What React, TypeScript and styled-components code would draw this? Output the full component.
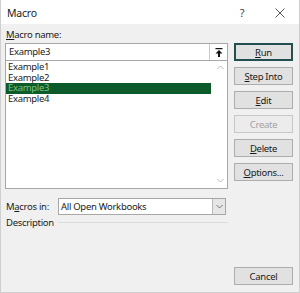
import React from "react";
import styled, { createGlobalStyle } from "styled-components";

const GlobalStyle = createGlobalStyle`
  html, body {
    margin: 0;
    padding: 0;
    background: #f0f0f0;
  }
  body {
    font-family: "Noto Sans", "Open Sans", sans-serif;
  }
`;

const Dialog = styled.div`
  width: 300px;
  height: 293px;
  box-sizing: border-box;
  border: 1px solid #cfcfcf;
  border-top: none;
  display: flex;
  flex-direction: column;
  background: #f0f0f0;
  color: #1b1b1b;
  font-size: 9.5px;
  letter-spacing: -0.3px;
`;

const TitleBar = styled.div`
  height: 24px;
  background: #ffffff;
  display: flex;
  align-items: center;
  padding-left: 6px;
`;

const Title = styled.div`
  flex: 1;
  font-size: 10.5px;
  letter-spacing: -0.2px;
  padding-top: 1px;
`;

const TitleButton = styled.div`
  width: 38px;
  height: 24px;
  display: flex;
  align-items: center;
  justify-content: center;
  color: #444;
  font-size: 11px;
  padding-top: 1px;
`;

const Body = styled.div`
  flex: 1;
  display: grid;
  grid-template-columns: 223px 59px;
  column-gap: 6px;
  padding: 3px 5px 7px 4px;
`;

const Left = styled.div`
  display: flex;
  flex-direction: column;
`;

const Right = styled.div`
  display: flex;
  flex-direction: column;
  gap: 6px;
  padding-top: 16px;
`;

const Label = styled.div`
  height: 16px;
  line-height: 16px;
  padding-left: 1px;
`;

const NameRow = styled.div`
  height: 18px;
  box-sizing: border-box;
  display: flex;
  background: #fff;
  border: 1px solid #a7a7a7;
`;

const NameText = styled.div`
  flex: 1;
  line-height: 16px;
  padding-left: 3px;
`;

const UpButton = styled.div`
  width: 17px;
  border-left: 1px solid #c9c9c9;
  display: flex;
  align-items: center;
  justify-content: center;
`;

const List = styled.div`
  height: 128px;
  box-sizing: border-box;
  background: #fff;
  border: 1px solid #a7a7a7;
  border-top: none;
  display: flex;
`;

const Items = styled.div`
  flex: 1;
  padding-top: 1px;
`;

const Item = styled.div<{ $selected?: boolean }>`
  height: 10.5px;
  line-height: 10.5px;
  padding-left: 2px;
  margin-right: 2px;
  background: ${(p) => (p.$selected ? "#0d5a2b" : "transparent")};
  color: ${(p) => (p.$selected ? "#7cc37e" : "#1b1b1b")};
`;

const ScrollBar = styled.div`
  width: 14px;
  display: flex;
  flex-direction: column;
  justify-content: space-between;
  align-items: center;
  padding: 4px 0 5px;
`;

const MacrosRow = styled.div`
  margin-top: 9px;
  height: 17px;
  display: flex;
  align-items: center;
`;

const RowLabel = styled.div`
  width: 52px;
  padding-left: 1px;
`;

const DescLabel = styled.div`
  padding-left: 1px;
`;

const Select = styled.div`
  flex: 1;
  height: 17px;
  box-sizing: border-box;
  margin-right: 2px;
  background: #fff;
  border: 1px solid #a7a7a7;
  display: flex;
`;

const SelectText = styled.div`
  flex: 1;
  line-height: 15px;
  padding-left: 2px;
`;

const DropButton = styled.div`
  width: 12px;
  background: #e6e6e6;
  border-left: 1px solid #b9b9b9;
  display: flex;
  align-items: center;
  justify-content: center;
`;

const DescRow = styled.div`
  height: 15px;
  display: flex;
  align-items: center;
`;

const Rule = styled.div`
  flex: 1;
  height: 1px;
  background: #dcdcdc;
  margin-left: 4px;
`;

const Button = styled.div<{ $default?: boolean; $disabled?: boolean }>`
  height: 18px;
  box-sizing: border-box;
  display: flex;
  align-items: center;
  justify-content: center;
  background: ${(p) => (p.$disabled ? "#ececec" : "#e1e1e1")};
  border: ${(p) =>
    p.$default ? "2px solid #23504f" : p.$disabled ? "1px solid #c8c8c8" : "1px solid #adadad"};
  color: ${(p) => (p.$disabled ? "#a3a3a3" : "#1b1b1b")};
`;

const CancelButton = styled(Button)`
  margin-top: auto;
`;

const Chevron = ({ up, color = "#b5b5b5" }: { up?: boolean; color?: string }) => (
  <svg width="7" height="5" viewBox="0 0 7 5">
    <polyline
      points={up ? "0.5,4 3.5,1 6.5,4" : "0.5,1 3.5,4 6.5,1"}
      fill="none"
      stroke={color}
      strokeWidth="1"
    />
  </svg>
);

const UpArrowIcon = () => (
  <svg width="8" height="9" viewBox="0 0 8 9">
    <rect x="0.5" y="0" width="7" height="1.2" fill="#111" />
    <polygon points="4,2 7.5,5.5 0.5,5.5" fill="#111" />
    <rect x="3" y="5" width="2" height="4" fill="#111" />
  </svg>
);

const CloseIcon = () => (
  <svg width="10" height="10" viewBox="0 0 10 10">
    <path d="M0.5 0.5 L9.5 9.5 M9.5 0.5 L0.5 9.5" stroke="#444" strokeWidth="0.9" />
  </svg>
);

const macros = ["Example1", "Example2", "Example3", "Example4"];

export default function App() {
  return (
    <>
      <GlobalStyle />
      <Dialog>
        <TitleBar>
          <Title>Macro</Title>
          <TitleButton>?</TitleButton>
          <TitleButton>
            <CloseIcon />
          </TitleButton>
        </TitleBar>
        <Body>
          <Left>
            <Label>
              <u>M</u>acro name:
            </Label>
            <NameRow>
              <NameText>Example3</NameText>
              <UpButton>
                <UpArrowIcon />
              </UpButton>
            </NameRow>
            <List>
              <Items>
                {macros.map((m) => (
                  <Item key={m} $selected={m === "Example3"}>
                    {m}
                  </Item>
                ))}
              </Items>
              <ScrollBar>
                <Chevron up />
                <Chevron />
              </ScrollBar>
            </List>
            <MacrosRow>
              <RowLabel>
                M<u>a</u>cros in:
              </RowLabel>
              <Select>
                <SelectText>All Open Workbooks</SelectText>
                <DropButton>
                  <Chevron color="#777" />
                </DropButton>
              </Select>
            </MacrosRow>
            <DescRow>
              <DescLabel>Description</DescLabel>
              <Rule />
            </DescRow>
          </Left>
          <Right>
            <Button $default>
              <span>
                <u>R</u>un
              </span>
            </Button>
            <Button>
              <span>
                <u>S</u>tep Into
              </span>
            </Button>
            <Button>
              <span>
                <u>E</u>dit
              </span>
            </Button>
            <Button $disabled>Create</Button>
            <Button>
              <span>
                <u>D</u>elete
              </span>
            </Button>
            <Button>
              <span>
                <u>O</u>ptions...
              </span>
            </Button>
            <CancelButton>Cancel</CancelButton>
          </Right>
        </Body>
      </Dialog>
    </>
  );
}
